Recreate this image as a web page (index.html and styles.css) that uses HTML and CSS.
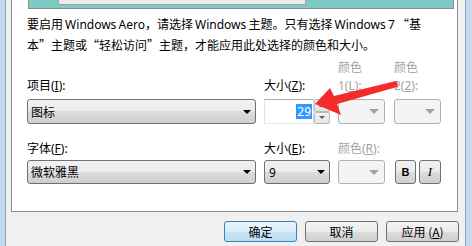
FILE: index.html
```html
<!DOCTYPE html>
<html lang="zh-CN">
<head>
    <meta charset="UTF-8">
    <title>窗口颜色和外观</title>
    <link rel="stylesheet" href="styles.css">
</head>
<body>
    <div class="window">
        <div class="panel">
            <div class="preview"><div class="preview-inner"></div></div>
            <p class="note">要启用 Windows Aero，请选择 Windows 主题。只有选择 Windows 7 <span class="q">“</span>基<br>本<span class="q">”</span>主题或<span class="q">“</span>轻松访问<span class="q">”</span>主题，才能应用此处选择的颜色和大小。</p>

            <div class="row row-a">
                <div class="field">
                    <label class="lbl">项目(<u>I</u>):</label>
                    <div class="combo"><span>图标</span><i class="caret"></i></div>
                </div>
                <div class="field">
                    <label class="lbl">大小(<u>Z</u>):</label>
                    <div class="spin">
                        <div class="edit"><span class="sel">29</span></div>
                        <div class="spin-btns">
                            <div class="spin-btn"><i class="up"></i></div>
                            <div class="spin-btn"><i class="down"></i></div>
                        </div>
                    </div>
                </div>
                <div class="field off">
                    <label class="lbl">颜色<br>1(<u>L</u>):</label>
                    <div class="combo"><i class="caret"></i></div>
                </div>
                <div class="field off">
                    <label class="lbl">颜色<br>2(<u>2</u>):</label>
                    <div class="combo"><i class="caret"></i></div>
                </div>
            </div>

            <div class="row row-b">
                <div class="field">
                    <label class="lbl">字体(<u>F</u>):</label>
                    <div class="combo"><span>微软雅黑</span><i class="caret"></i></div>
                </div>
                <div class="field">
                    <label class="lbl">大小(<u>E</u>):</label>
                    <div class="combo"><span class="num">9</span><i class="caret"></i></div>
                </div>
                <div class="field off">
                    <label class="lbl">颜色(<u>R</u>):</label>
                    <div class="combo"><i class="caret"></i></div>
                </div>
                <div class="field">
                    <div class="tools">
                        <div class="tool bold">B</div>
                        <div class="tool italic">I</div>
                    </div>
                </div>
            </div>
        </div>

        <div class="buttons">
            <div class="btn default">确定</div>
            <div class="btn">取消</div>
            <div class="btn">应用 (<u>A</u>)</div>
        </div>
    </div>

    <!-- 标注箭头 -->
    <svg class="arrow" width="472" height="246" viewBox="0 0 472 246">
        <polygon points="315,104 330,88 334,96 396,81 398,84 397,87 337,104 341,115" fill="#f52a2a"/>
    </svg>
</body>
</html>
```

FILE: styles.css
```css
* {
    box-sizing: border-box;
}
body {
    margin: 0;
    width: 472px;
    height: 246px;
    overflow: hidden;
    position: relative;
    background-color: #c4d8ee;
    font-family: "Noto Sans", "Noto Sans CJK SC", sans-serif;
    font-size: 12px;
    color: #000;
}
.window {
    margin-left: 5px;
    width: 461px;
    height: 246px;
    background-color: #f0f0f0;
    border-left: 1px solid #8ea4bd;
    border-right: 1px solid #8ea4bd;
}
.panel {
    margin-left: 5px;
    width: 447px;
    height: 212px;
    padding-left: 15px;
    background-color: #fff;
    border: 1px solid #898c95;
    border-top: none;
}
.preview {
    margin-left: 1px;
    width: 426px;
    height: 9px;
    background-color: #7ecbc6;
    border: 1px solid #8c8c8c;
    border-top: none;
}
.preview-inner {
    margin-left: 29px;
    width: 248px;
    height: 5px;
    background-color: #ececec;
    border: 1px solid #a0a0a0;
    border-top: none;
}
.note {
    margin: 5px 0 0 0;
    line-height: 20px;
    white-space: nowrap;
    word-spacing: -1px;
}
.note .q {
    font-family: "Noto Sans CJK SC", sans-serif;
}
.row {
    display: grid;
    grid-template-columns: 229px 66px 48px 47px;
    column-gap: 8px;
    align-items: end;
}
.row-a {
    margin-top: 3px;
}
.row-b {
    margin-top: 16px;
}
.lbl {
    display: block;
    line-height: 18px;
    white-space: nowrap;
}
.row-a .lbl {
    margin-bottom: 4px;
}
.row-b .lbl {
    margin-bottom: 2px;
}
.off .lbl {
    color: #a3a3a3;
}
.combo {
    display: flex;
    align-items: center;
    justify-content: space-between;
    height: 25px;
    padding: 0 4px 0 3px;
    border: 1px solid #707070;
    border-radius: 3px;
    background: linear-gradient(#f2f2f2, #ebebeb 50%, #dddddd 50%, #cfcfcf);
}
.row-b .combo {
    height: 24px;
}
.combo .num {
    padding-left: 1px;
}
.caret {
    width: 0;
    height: 0;
    margin-left: auto;
    border-left: 4px solid transparent;
    border-right: 4px solid transparent;
    border-top: 4px solid #000;
}
.off .combo {
    width: 47px;
    padding-right: 5px;
    border-color: #adb2b5;
    background: #f4f4f4;
}
.off .caret {
    border-left-width: 5px;
    border-right-width: 5px;
    border-top: 5px solid #a3a3a3;
}
.spin {
    display: flex;
    height: 25px;
}
.edit {
    display: flex;
    align-items: center;
    justify-content: flex-end;
    width: 50px;
    padding-right: 1px;
    background-color: #fff;
    border: 1px solid;
    border-color: #abadb3 #dbdfe6 #e3e9ef #e2e3ea;
}
.sel {
    background-color: #3399ff;
    color: #fff;
    line-height: 15px;
    padding: 0 1px;
}
.spin-btns {
    display: flex;
    flex-direction: column;
    width: 16px;
}
.spin-btn {
    flex: 1;
    display: flex;
    align-items: center;
    justify-content: center;
    border: 1px solid #b4b8bf;
    border-radius: 2px;
    background: linear-gradient(#f4f4f4, #e4e4e4);
}
.up,
.down {
    width: 0;
    height: 0;
    border-left: 3px solid transparent;
    border-right: 3px solid transparent;
}
.up {
    border-bottom: 3px solid #4d6185;
}
.down {
    border-top: 3px solid #4d6185;
}
.tools {
    display: flex;
    gap: 3px;
    margin-left: 1px;
}
.tool {
    height: 24px;
    display: flex;
    align-items: center;
    justify-content: center;
    border: 1px solid #707070;
    border-radius: 3px;
    background: linear-gradient(#f2f2f2, #ebebeb 50%, #dddddd 50%, #cfcfcf);
}
.tool.bold {
    width: 21px;
    font-family: "Liberation Sans", Arial, sans-serif;
    font-weight: bold;
    font-size: 11px;
}
.tool.italic {
    width: 22px;
    font-family: "Liberation Serif", serif;
    font-style: italic;
    font-size: 13px;
}
.buttons {
    display: flex;
    justify-content: flex-end;
    gap: 8px;
    padding: 9px 6px 0 0;
}
.btn {
    width: 73px;
    height: 21px;
    display: flex;
    align-items: center;
    justify-content: center;
    border: 1px solid #707070;
    border-radius: 3px;
    background: linear-gradient(#f2f2f2, #ebebeb 50%, #dddddd 50%, #cfcfcf);
    font-family: "Noto Sans CJK SC", sans-serif;
}
.btn.default {
    border-color: #3c7fb1;
    background: linear-gradient(#e8f4fc, #dbeefa 50%, #c8e5f7 50%, #bcdff4);
}
.arrow {
    position: absolute;
    top: 0;
    left: 0;
    pointer-events: none;
}
```
